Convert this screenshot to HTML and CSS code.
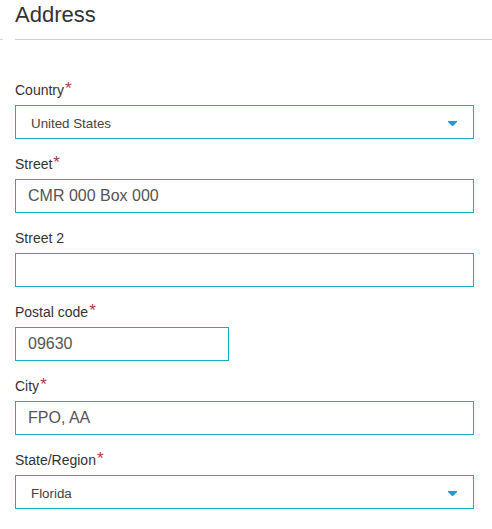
FILE: index.html
```html
<!DOCTYPE html>
<html lang="en">
<head>
<meta charset="utf-8">
<title>Address</title>
<link rel="stylesheet" href="styles.css">
</head>
<body>
<div class="page">
  <div class="head">
    <span class="stub"></span>
    <h2 class="title">Address</h2>
  </div>
  <form class="form">
    <div class="field">
      <label class="label">Country<span class="req">*</span></label>
      <div class="select">
        <span class="select-text">United States</span>
        <svg class="arrow" width="9" height="5" viewBox="0 0 9 5"><polygon points="0,0 9,0 9,1 5,5 4,5 0,1" fill="#1c9ddb"/></svg>
      </div>
    </div>
    <div class="field">
      <label class="label">Street<span class="req">*</span></label>
      <input class="input" type="text" value="CMR 000 Box 000">
    </div>
    <div class="field">
      <label class="label">Street 2</label>
      <input class="input" type="text" value="">
    </div>
    <div class="field">
      <label class="label">Postal code<span class="req">*</span></label>
      <input class="input input-short" type="text" value="09630">
    </div>
    <div class="field">
      <label class="label">City<span class="req">*</span></label>
      <input class="input" type="text" value="FPO, AA">
    </div>
    <div class="field">
      <label class="label">State/Region<span class="req">*</span></label>
      <div class="select">
        <span class="select-text">Florida</span>
        <svg class="arrow" width="9" height="5" viewBox="0 0 9 5"><polygon points="0,0 9,0 9,1 5,5 4,5 0,1" fill="#1c9ddb"/></svg>
      </div>
    </div>
  </form>
</div>
</body>
</html>
```

FILE: styles.css
```css
* { box-sizing: border-box; }
html, body { margin: 0; padding: 0; background: #fff; }
body {
  font-family: "Liberation Sans", Arial, sans-serif;
  color: #333;
  width: 492px;
}
.page { display: flex; flex-direction: column; }
.head {
  display: flex;
  align-items: flex-end;
  gap: 12px;
}
.stub {
  width: 3px;
  height: 1px;
  border-bottom: 1px solid #d4d4d4;
}
.title {
  flex: 1;
  margin: 0;
  padding: 2px 0 12px;
  font-size: 22px;
  line-height: 25px;
  font-weight: normal;
  color: #333;
  border-bottom: 1px solid #cfcfcf;
}
.form {
  display: flex;
  flex-direction: column;
  gap: 17px;
  padding: 42px 0 0 15px;
}
.field {
  display: flex;
  flex-direction: column;
  width: 459px;
}
.label {
  font-size: 14px;
  line-height: 17px;
  height: 17px;
  margin-bottom: 6px;
  color: #333;
}
.req {
  color: #b53848;
  font-size: 17px;
  line-height: 10px;
  margin-left: 1px;
  position: relative;
  top: -1px;
}
.input {
  width: 459px;
  height: 34px;
  border: 1px solid #16b0cd;
  border-radius: 0;
  padding: 0 12px;
  margin: 0;
  font-family: "Liberation Sans", Arial, sans-serif;
  font-size: 16px;
  color: #555;
  background: #fff;
  outline: none;
}
.input-short { width: 214px; }
.select {
  display: flex;
  align-items: center;
  justify-content: space-between;
  height: 34px;
  border: 1px solid #16b0cd;
  padding: 2px 16px 0 15px;
  background: #fff;
}
.select-text {
  font-size: 13.333px;
  color: #444;
}
.arrow { display: block; }
```
